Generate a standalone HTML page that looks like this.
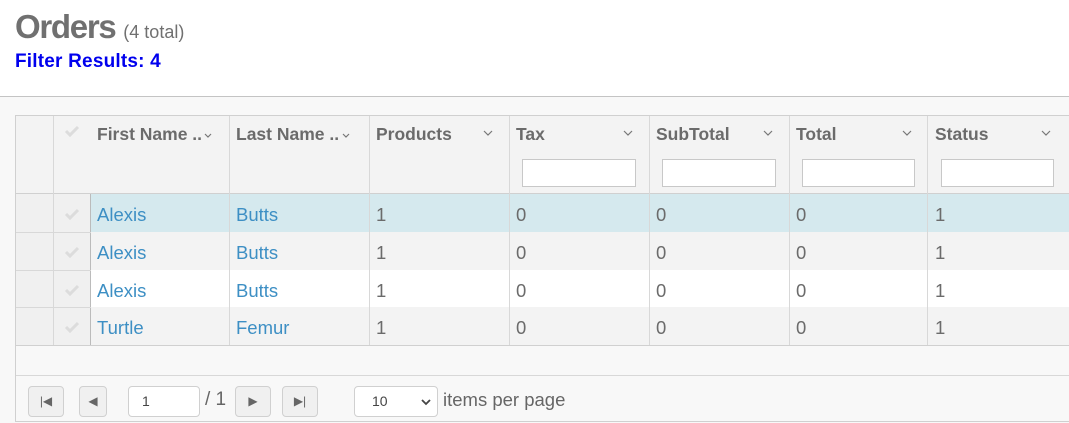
<!DOCTYPE html>
<html><head><style>
body{margin:0;width:1069px;height:422px;overflow:hidden;background:#fff;font-family:"Liberation Sans",sans-serif;position:relative}
.a{position:absolute}
h1{position:absolute;left:15px;top:8px;margin:0;font-size:33px;color:#707070;font-weight:bold;letter-spacing:-1.3px}
h1 span{font-size:18px;font-weight:normal;letter-spacing:0}
.fr{left:15px;top:51px;font-size:19px;color:#0000ee;font-weight:bold;letter-spacing:0.2px}
.wrap{left:0;top:96px;width:1069px;height:326px;background:#f8f8f8;border-top:1px solid #c4c4c4}
.grid{left:15px;top:115px;width:1054px;height:307px;border:1px solid #d0d0d0;border-right:none;background:#f8f8f8;box-sizing:border-box}
.hd{color:#6b6b6b;font-weight:bold;font-size:17.5px;line-height:36px}
.lnk{color:#3d8fc4}
.btn{position:absolute;top:386px;height:31px;background:#f0f0f0;border:1px solid #d0d0d0;border-radius:4px;box-sizing:border-box;font-size:12px;color:#666;text-align:center;line-height:29px}
</style></head><body>
<h1>Orders <span>(4 total)</span></h1>
<div class="a fr">Filter Results: 4</div>
<div class="a wrap"></div>
<div class="a grid"></div>
<div class="a" style="left:16px;top:116px;width:1053px;height:77px;background:#f3f3f3;border-bottom:1px solid #d0d0d0"></div>
<div class="a" style="left:16px;top:194px;width:1053px;height:38px;background:#d5e9ee"></div>
<div class="a" style="left:16px;top:232px;width:1053px;height:38px;background:#f3f3f3"></div>
<div class="a" style="left:16px;top:270px;width:1053px;height:37px;background:#fff"></div>
<div class="a" style="left:16px;top:307px;width:1053px;height:38px;background:#f3f3f3;border-bottom:1px solid #d0d0d0"></div>
<div class="a" style="left:16px;top:194px;width:75px;height:151px;background:#f0f0f0"></div>
<div class="a" style="left:16px;top:375px;width:1053px;height:1px;background:#d8d8d8"></div>
<div class="a" style="left:53px;top:116px;width:1px;height:229px;background:#d8d8d8"></div>
<div class="a" style="left:90px;top:194px;width:1px;height:151px;background:#bbb"></div>
<div class="a" style="left:229px;top:116px;width:1px;height:229px;background:#d8d8d8"></div>
<div class="a" style="left:369px;top:116px;width:1px;height:229px;background:#d8d8d8"></div>
<div class="a" style="left:509px;top:116px;width:1px;height:229px;background:#d8d8d8"></div>
<div class="a" style="left:649px;top:116px;width:1px;height:229px;background:#d8d8d8"></div>
<div class="a" style="left:789px;top:116px;width:1px;height:229px;background:#d8d8d8"></div>
<div class="a" style="left:927px;top:116px;width:1px;height:229px;background:#d8d8d8"></div>
<div class="a" style="left:16px;top:232px;width:75px;height:1px;background:#d8d8d8"></div>
<div class="a" style="left:16px;top:270px;width:75px;height:1px;background:#d8d8d8"></div>
<div class="a" style="left:16px;top:307px;width:75px;height:1px;background:#d8d8d8"></div>
<div class="a hd" style="left:97px;top:116px">First Name ..</div>
<div class="a hd" style="left:236px;top:116px">Last Name ..</div>
<div class="a hd" style="left:376px;top:116px">Products</div>
<div class="a hd" style="left:516px;top:116px">Tax</div>
<div class="a hd" style="left:656px;top:116px">SubTotal</div>
<div class="a hd" style="left:796px;top:116px">Total</div>
<div class="a hd" style="left:935px;top:116px">Status</div>
<svg class="a" style="left:0;top:0" width="1069" height="345">
<g fill="none" stroke="#777" stroke-width="1.2">
<path d="M484 131l4 4 4-4M624 131l4 4 4-4M764 131l4 4 4-4M903 131l4 4 4-4M1042 131l4 4 4-4M205 134l3 3 3-3M343 134l3 3 3-3"/>
</g>
<g fill="none" stroke="#dcdcdc" stroke-width="3">
<path d="M66 131l4 4 8-8M66 214l4 4 8-8M66 252l4 4 8-8M66 290l4 4 8-8M66 327l4 4 8-8"/>
</g></svg>
<div class="a" style="left:522px;top:159px;width:114px;height:28px;background:#fff;border:1px solid #c8c8c8;box-sizing:border-box"></div>
<div class="a" style="left:662px;top:159px;width:114px;height:28px;background:#fff;border:1px solid #c8c8c8;box-sizing:border-box"></div>
<div class="a" style="left:802px;top:159px;width:113px;height:28px;background:#fff;border:1px solid #c8c8c8;box-sizing:border-box"></div>
<div class="a" style="left:941px;top:159px;width:113px;height:28px;background:#fff;border:1px solid #c8c8c8;box-sizing:border-box"></div>
<div style="position:absolute;left:0;top:196px;font-size:18.5px;line-height:38px;color:#6b6b6b">
<div class="a" style="top:0;left:0;width:1069px">
<span class="a lnk" style="left:97px">Alexis</span><span class="a lnk" style="left:236px">Butts</span><span class="a" style="left:376px">1</span><span class="a" style="left:516px">0</span><span class="a" style="left:656px">0</span><span class="a" style="left:796px">0</span><span class="a" style="left:935px">1</span></div>
<div class="a" style="top:38px;left:0;width:1069px">
<span class="a lnk" style="left:97px">Alexis</span><span class="a lnk" style="left:236px">Butts</span><span class="a" style="left:376px">1</span><span class="a" style="left:516px">0</span><span class="a" style="left:656px">0</span><span class="a" style="left:796px">0</span><span class="a" style="left:935px">1</span></div>
<div class="a" style="top:76px;left:0;width:1069px">
<span class="a lnk" style="left:97px">Alexis</span><span class="a lnk" style="left:236px">Butts</span><span class="a" style="left:376px">1</span><span class="a" style="left:516px">0</span><span class="a" style="left:656px">0</span><span class="a" style="left:796px">0</span><span class="a" style="left:935px">1</span></div>
<div class="a" style="top:113px;left:0;width:1069px">
<span class="a lnk" style="left:97px">Turtle</span><span class="a lnk" style="left:236px">Femur</span><span class="a" style="left:376px">1</span><span class="a" style="left:516px">0</span><span class="a" style="left:656px">0</span><span class="a" style="left:796px">0</span><span class="a" style="left:935px">1</span></div>
</div>
<div class="btn" style="left:28px;width:36px">|◀</div>
<div class="btn" style="left:79px;width:28px">◀</div>
<div class="btn" style="left:128px;width:72px;background:#fff;text-align:left;padding-left:13px;font-size:14px;color:#444">1</div>
<div class="a" style="left:205px;top:389px;font-size:19px;color:#666">/ 1</div>
<div class="btn" style="left:235px;width:36px">▶</div>
<div class="btn" style="left:282px;width:36px">▶|</div>
<div class="btn" style="left:354px;width:84px;background:#fff;text-align:left;padding-left:17px;font-size:14px;color:#444">10<svg style="position:absolute;right:6px;top:12px" width="10" height="7"><path d="M1 1l4 4 4-4" stroke="#444" stroke-width="1.8" fill="none"/></svg></div>
<div class="a" style="left:443px;top:389px;font-size:18.5px;color:#666">items per page</div>
</body></html>
